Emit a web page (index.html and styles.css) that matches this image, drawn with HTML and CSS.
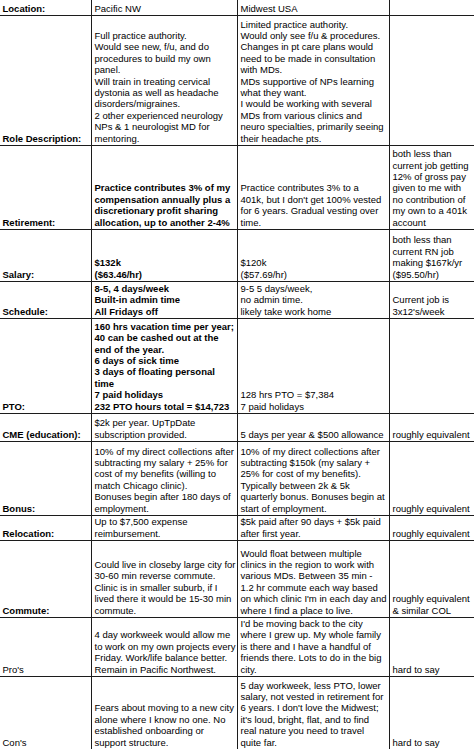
FILE: index.html
```html
<!DOCTYPE html>
<html>
<head>
<meta charset="utf-8">
<link rel="stylesheet" href="styles.css">
</head>
<body>
<table class="sheet">
  <colgroup>
    <col class="c-label">
    <col class="c-pnw">
    <col class="c-mw">
    <col class="c-note">
  </colgroup>
  <tbody>
    <tr class="r-location">
      <td class="label">Location:</td>
      <td>Pacific NW</td>
      <td>Midwest USA</td>
      <td></td>
    </tr>
    <tr class="r-role">
      <td class="label">Role Description:</td>
      <td>Full practice authority.<br>Would see new, f/u, and do procedures to build my own panel.<br>Will train in treating cervical dystonia as well as headache disorders/migraines.<br>2 other experienced neurology NPs &amp; 1 neurologist MD for mentoring.</td>
      <td>Limited practice authority.<br>Would only see f/u &amp; procedures.<br>Changes in pt care plans would need to be made in consultation with MDs.<br>MDs supportive of NPs learning what they want.<br>I would be working with several MDs from various clinics and neuro specialties, primarily seeing their headache pts.</td>
      <td></td>
    </tr>
    <tr class="r-retirement">
      <td class="label">Retirement:</td>
      <td class="strong">Practice contributes 3% of my compensation annually plus a discretionary profit sharing allocation, up to another 2-4%</td>
      <td class="keep">Practice contributes 3% to a<br>401k, but I don't get 100% vested<br>for 6 years. Gradual vesting over<br>time.</td>
      <td>both less than current job getting 12% of gross pay given to me with no contribution of my own to a 401k account</td>
    </tr>
    <tr class="r-salary">
      <td class="label">Salary:</td>
      <td class="strong">$132k<br>($63.46/hr)</td>
      <td>$120k<br>($57.69/hr)</td>
      <td>both less than current RN job making $167k/yr ($95.50/hr)</td>
    </tr>
    <tr class="r-schedule">
      <td class="label">Schedule:</td>
      <td class="strong">8-5, 4 days/week<br>Built-in admin time<br>All Fridays off</td>
      <td>9-5 5 days/week,<br>no admin time.<br>likely take work home</td>
      <td>Current job is 3x12's/week</td>
    </tr>
    <tr class="r-pto">
      <td class="label">PTO:</td>
      <td class="strong">160 hrs vacation time per year; 40 can be cashed out at the end of the year.<br>6 days of sick time<br>3 days of floating personal time<br>7 paid holidays<br>232 PTO hours total = $14,723</td>
      <td>128 hrs PTO = $7,384<br>7 paid holidays</td>
      <td></td>
    </tr>
    <tr class="r-cme">
      <td class="label">CME (education):</td>
      <td>$2k per year. UpTpDate subscription provided.</td>
      <td>5 days per year &amp; $500 allowance</td>
      <td>roughly equivalent</td>
    </tr>
    <tr class="r-bonus">
      <td class="label">Bonus:</td>
      <td>10% of my direct collections after subtracting my salary + 25% for cost of my benefits (willing to match Chicago clinic).<br>Bonuses begin after 180 days of employment.</td>
      <td>10% of my direct collections after subtracting $150k (my salary + 25% for cost of my benefits). Typically between 2k &amp; 5k quarterly bonus. Bonuses begin at start of employment.</td>
      <td>roughly equivalent</td>
    </tr>
    <tr class="r-relocation">
      <td class="label">Relocation:</td>
      <td>Up to $7,500 expense reimbursement.</td>
      <td>$5k paid after 90 days + $5k paid after first year.</td>
      <td>roughly equivalent</td>
    </tr>
    <tr class="r-commute">
      <td class="label">Commute:</td>
      <td class="keep">Could live in closeby large city for<br>30-60 min reverse commute.<br>Clinic is in smaller suburb, if I<br>lived there it would be 15-30 min<br>commute.</td>
      <td>Would float between multiple clinics in the region to work with various MDs. Between 35 min - 1.2 hr commute each way based on which clinic I'm in each day and where I find a place to live.</td>
      <td>roughly equivalent &amp; similar COL</td>
    </tr>
    <tr class="r-pros">
      <td>Pro's</td>
      <td class="keep">4 day workweek would allow me<br>to work on my own projects every<br>Friday. Work/life balance better.<br>Remain in Pacific Northwest.</td>
      <td>I'd be moving back to the city where I grew up. My whole family is there and I have a handful of friends there. Lots to do in the big city.</td>
      <td>hard to say</td>
    </tr>
    <tr class="r-cons">
      <td>Con's</td>
      <td>Fears about moving to a new city alone where I know no one. No established onboarding or support structure.</td>
      <td>5 day workweek, less PTO, lower salary, not vested in retirement for 6 years. I don't love the Midwest; it's loud, bright, flat, and to find real nature you need to travel quite far.</td>
      <td>hard to say</td>
    </tr>
  </tbody>
</table>
</body>
</html>
```

FILE: styles.css
```css
html, body {
  margin: 0;
  padding: 0;
  background: #ffffff;
}

body {
  overflow: hidden;
  font-family: "Liberation Sans", Arial, sans-serif;
  font-size: 9.5px;
  line-height: 11.4px;
  color: #000000;
}

.sheet {
  border-collapse: collapse;
  table-layout: fixed;
  width: 477px;
  margin: -1px 0 0 -1px;
}

.c-label { width: 92px; }
.c-pnw { width: 146px; }
.c-mw { width: 152px; }
.c-note { width: 87px; }

.sheet td {
  border: 1px solid #1c1c1c;
  padding: 0 2px 1px 2.5px;
  vertical-align: bottom;
  overflow: hidden;
  word-wrap: break-word;
}

.sheet td.keep {
  white-space: nowrap;
  overflow: visible;
}

.sheet td.label,
.sheet td.strong {
  font-weight: bold;
}

.r-location { height: 16px; }
.r-role { height: 130px; }
.r-retirement { height: 84px; }
.r-salary { height: 52px; }
.r-schedule { height: 37px; }
.r-pto { height: 95px; }
.r-cme { height: 28px; }
.r-bonus { height: 74px; }
.r-relocation { height: 25px; }
.r-commute { height: 77px; }
.r-pros { height: 59px; }
.r-cons { height: 73px; }
```
